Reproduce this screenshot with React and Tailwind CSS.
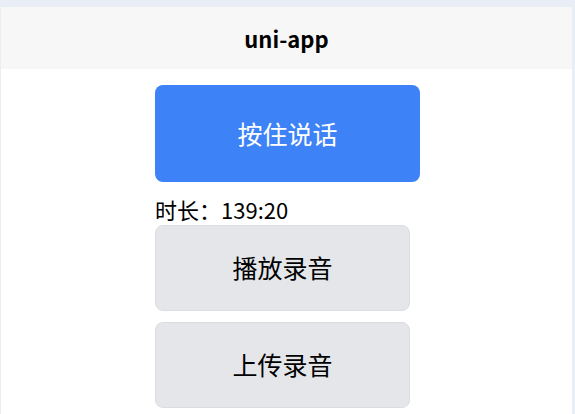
import React, { useState } from 'react';

export default function App() {
    const [duration] = useState('139:20');
    return (
        <div className="w-[575px] h-[414px] bg-[#e9edf5] pt-[7px] pl-px pr-[3px] overflow-hidden" style={{ fontFamily: '"Noto Sans CJK SC", "Noto Sans", sans-serif' }}>
            <div className="h-full bg-white flex flex-col">
                <div className="h-[62px] bg-[#f7f7f7] flex items-center justify-center">
                    <span className="text-[22px] font-bold text-black">uni-app</span>
                </div>
                <div className="flex flex-col w-[265px] ml-[154px] mt-4">
                    <button className="h-[97px] w-full rounded-lg bg-[#3d83f7] text-white text-[25px]">
                        按住说话
                    </button>
                    <p className="mt-[14px] text-[22px] leading-[27px] pb-[2px] text-black">时长：{duration}</p>
                    <button className="h-[86px] w-[255px] rounded-lg bg-[#e5e6ea] border border-[#dcdde1] text-[25px] text-black">
                        播放录音
                    </button>
                    <button className="mt-[11px] h-[86px] w-[255px] rounded-lg bg-[#e5e6ea] border border-[#dcdde1] text-[25px] text-black">
                        上传录音
                    </button>
                </div>
            </div>
        </div>
    );
}
